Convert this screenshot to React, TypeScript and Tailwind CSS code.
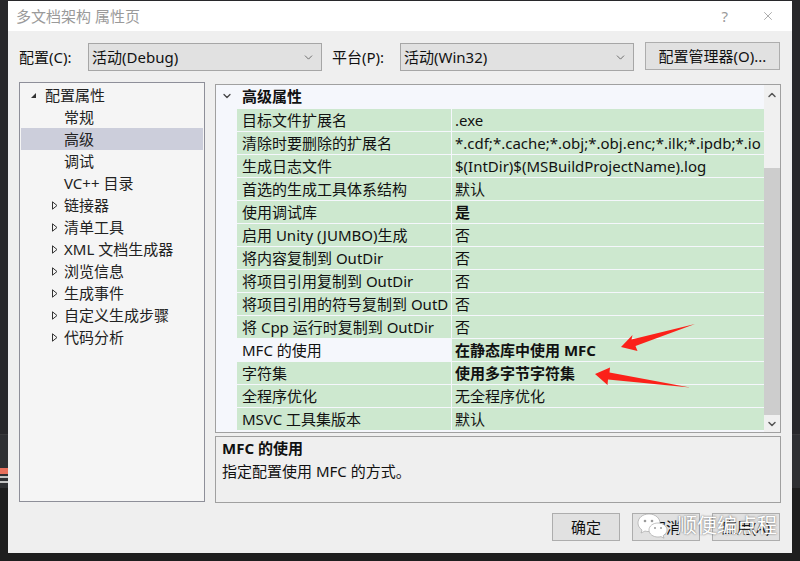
import { ChevronDown, ChevronUp, X } from 'lucide-react';

const font = { fontFamily: '"Noto Sans", "Noto Sans CJK SC", sans-serif' };

const treeItems = [
  { label: '配置属性', level: 0, arrow: 'open' },
  { label: '常规', level: 1 },
  { label: '高级', level: 1, selected: true },
  { label: '调试', level: 1 },
  { label: 'VC++ 目录', level: 1 },
  { label: '链接器', level: 1, arrow: 'closed' },
  { label: '清单工具', level: 1, arrow: 'closed' },
  { label: 'XML 文档生成器', level: 1, arrow: 'closed' },
  { label: '浏览信息', level: 1, arrow: 'closed' },
  { label: '生成事件', level: 1, arrow: 'closed' },
  { label: '自定义生成步骤', level: 1, arrow: 'closed' },
  { label: '代码分析', level: 1, arrow: 'closed' },
];

const props = [
  { name: '目标文件扩展名', value: '.exe' },
  { name: '清除时要删除的扩展名', value: '*.cdf;*.cache;*.obj;*.obj.enc;*.ilk;*.ipdb;*.io' },
  { name: '生成日志文件', value: '$(IntDir)$(MSBuildProjectName).log' },
  { name: '首选的生成工具体系结构', value: '默认' },
  { name: '使用调试库', value: '是', bold: true },
  { name: '启用 Unity (JUMBO)生成', value: '否' },
  { name: '将内容复制到 OutDir', value: '否' },
  { name: '将项目引用复制到 OutDir', value: '否' },
  { name: '将项目引用的符号复制到 OutD', value: '否' },
  { name: '将 Cpp 运行时复制到 OutDir', value: '否' },
  { name: 'MFC 的使用', value: '在静态库中使用 MFC', bold: true, selected: true },
  { name: '字符集', value: '使用多字节字符集', bold: true },
  { name: '全程序优化', value: '无全程序优化' },
  { name: 'MSVC 工具集版本', value: '默认' },
];

function Combo({ text }: { text: string }) {
  return (
    <div className="w-[234px] h-[28px] shrink-0 border border-[#a6a6a6] bg-[#e1e1e1] flex items-center pl-[3px] pr-[6px] text-[15px] text-[#111]">
      <span className="flex-1">{text}</span>
      <ChevronDown className="w-[13px] h-[13px] text-[#555]" strokeWidth={1.5} />
    </div>
  );
}

function DlgButton({ text }: { text: string }) {
  return (
    <div className="w-[68px] h-[28px] border border-[#adadad] bg-[#e1e1e1] flex items-center justify-center text-[15px] text-[#111]">
      {text}
    </div>
  );
}

export default function App() {
  return (
    <div className="relative w-[800px] h-[561px] overflow-hidden bg-[#1e1e1e] leading-none" style={font}>
      {/* editor showing behind the dialog */}
      <div className="absolute inset-x-0 top-0 h-[434px] bg-[#28282b]" />
      <div className="absolute inset-x-0 top-[434px] h-[54px] bg-[#2f3033] border-t border-[#3a3a3c]" />
      <div className="absolute left-0 top-[468px] w-[8px] h-[6px] bg-[#e8705c]" />
      <div className="absolute left-0 top-[476px] w-[8px] h-[2px] bg-[#c4c4c4]" />
      <div className="absolute left-0 top-[481px] w-[8px] h-[2px] bg-[#c4c4c4]" />

      <div className="relative mt-px ml-[8px] w-[784px] h-[552px] bg-[#efefef] flex flex-col">
        {/* title bar */}
        <div className="h-[30px] bg-white flex items-center pl-[8px] pr-[17px] shrink-0">
          <span className="flex-1 text-[15px] text-[#9a9a9a]">多文档架构 属性页</span>
          <span className="text-[15px] text-[#9a9a9a] mr-[33px]">?</span>
          <X className="w-[14px] h-[14px] text-[#8a8a8a]" strokeWidth={1.2} />
        </div>

        {/* config row */}
        <div className="h-[28px] mt-[12px] flex items-center text-[15px] text-[#111] shrink-0">
          <span className="w-[80px] pl-[11px] shrink-0">配置(C):</span>
          <Combo text="活动(Debug)" />
          <span className="w-[78px] pl-[10px] shrink-0">平台(P):</span>
          <Combo text="活动(Win32)" />
          <div className="ml-[11px] w-[135px] h-[28px] -mt-[2px] border border-[#adadad] bg-[#e1e1e1] flex items-center justify-center">
            配置管理器(O)...
          </div>
        </div>

        <div className="flex mt-[11px] pl-[11px] gap-[10px]">
          {/* tree */}
          <div className="w-[186px] h-[420px] border border-[#8e8f99] bg-[#f5f5f5] pt-px px-px shrink-0">
            {treeItems.map((item) => (
              <div
                key={item.label}
                className={`h-[22px] flex items-center text-[15px] text-[#222] ${item.selected ? 'bg-[#cccedb]' : ''}`}
              >
                <span className="w-[24px] shrink-0 flex justify-end pr-[1px]">
                  {item.level === 0 && (
                    <svg width="7" height="7" viewBox="0 0 7 7" className="mr-[7px]">
                      <path d="M6 1V6H1Z" fill="#333" />
                    </svg>
                  )}
                </span>
                <span className={`${item.level === 1 ? 'w-[19px]' : 'w-0'} shrink-0 flex justify-center`}>
                  {item.arrow === 'closed' && (
                    <svg width="6" height="9" viewBox="0 0 6 9">
                      <path d="M.5.8 5 4.500.5 8.200Z" fill="none" stroke="#333" />
                    </svg>
                  )}
                </span>
                <span className="whitespace-nowrap">{item.label}</span>
              </div>
            ))}
          </div>

          <div className="w-[566px] flex flex-col mt-[2px]">
            {/* property grid */}
            <div className="h-[349px] border border-[#a0a0a0] bg-[#f5f7fc] flex overflow-hidden">
              <div className="w-[548px] shrink-0">
                <div className="h-[24px] -mt-px flex items-center text-[15px] font-bold text-[#111]">
                  <ChevronDown className="w-[12px] h-[12px] ml-[5px] mr-[9px] text-[#444]" strokeWidth={2.5} />
                  <span>高级属性</span>
                </div>
                <div className="mt-px">
                  {props.map((p) => (
                    <div key={p.name} className="h-[23px] flex pl-[21px] text-[15px] text-[#111]">
                      <div
                        className={`w-[214px] h-[22px] shrink-0 pl-[5px] flex items-center overflow-hidden whitespace-nowrap ${p.selected ? 'bg-[#f5f7fc]' : 'bg-[#cde8cf]'}`}
                      >
                        {p.name}
                      </div>
                      <div
                        className={`ml-px flex-1 h-[22px] pl-[3px] flex items-center overflow-hidden whitespace-nowrap bg-[#cde8cf] ${p.bold ? 'font-bold' : ''}`}
                      >
                        {p.value}
                      </div>
                    </div>
                  ))}
                </div>
              </div>
              {/* scrollbar */}
              <div className="flex-1 bg-[#f0f0f0] flex flex-col items-center">
                <ChevronUp className="w-[12px] h-[12px] mt-[4px] text-[#555] shrink-0" strokeWidth={3} />
                <div className="w-full h-[247px] bg-[#cdcdcd] mt-[67px] shrink-0" />
                <ChevronDown className="w-[12px] h-[12px] mt-[3px] text-[#555] shrink-0" strokeWidth={3} />
              </div>
            </div>

            {/* description */}
            <div className="h-[67px] mt-[3px] border border-[#a0a0a0] px-[6px] text-[15px] text-[#111]">
              <div className="font-bold h-[22px] flex items-center">MFC 的使用</div>
              <div className="h-[22px] mt-px flex items-center">指定配置使用 MFC 的方式。</div>
            </div>
          </div>
        </div>

        {/* footer buttons */}
        <div className="flex justify-end gap-[12px] pr-[12px] mt-[10px]">
          <DlgButton text="确定" />
          <DlgButton text="取消" />
          <DlgButton text="应用(A)" />
        </div>
      </div>

      {/* red annotation arrows */}
      <svg className="absolute left-0 top-0 pointer-events-none" width="800" height="561" viewBox="0 0 800 561">
        <path d="M695 324 L631.500 339.500 L632.500 335 L621 347 L637.500 351 L635.500 346 Z" fill="#fb2119" />
        <path d="M690 387.500 L609.500 372.500 L610 367.500 L595 374 L607.500 385 L608 379.500 Z" fill="#fb2119" />
      </svg>

      {/* watermark */}
      <div className="absolute left-[636px] top-[511px] flex items-center text-white [text-shadow:0_0_2px_#555]">
        <svg width="34" height="30" viewBox="0 0 34 30">
          <path d="M13 3C6.500 3 2 7 2 12c0 3 1.500 5 4 7l-1 3 4-2c1.300.4 2.500.6 4 .6 6.500 0 11-4 11-8.600S19.500 3 13 3Z" fill="#fff" stroke="#9a9a9a" strokeWidth=".6" />
          <path d="M22 12c-5 0-9 3-9 7s4 7 9 7c1 0 2-.1 3-.4l3 1.600-.8-2.600C29.500 23.300 31 21.300 31 19c0-4-4-7-9-7Z" fill="#fff" stroke="#9a9a9a" strokeWidth=".6" />
          <circle cx="9" cy="10" r="1.300" fill="#9a9a9a" />
          <circle cx="16" cy="10" r="1.300" fill="#9a9a9a" />
          <circle cx="19" cy="17" r="1" fill="#9a9a9a" />
          <circle cx="25" cy="17" r="1" fill="#9a9a9a" />
        </svg>
        <span className="text-[20px] ml-[7px] whitespace-nowrap">顺便编点程</span>
      </div>
    </div>
  );
}
